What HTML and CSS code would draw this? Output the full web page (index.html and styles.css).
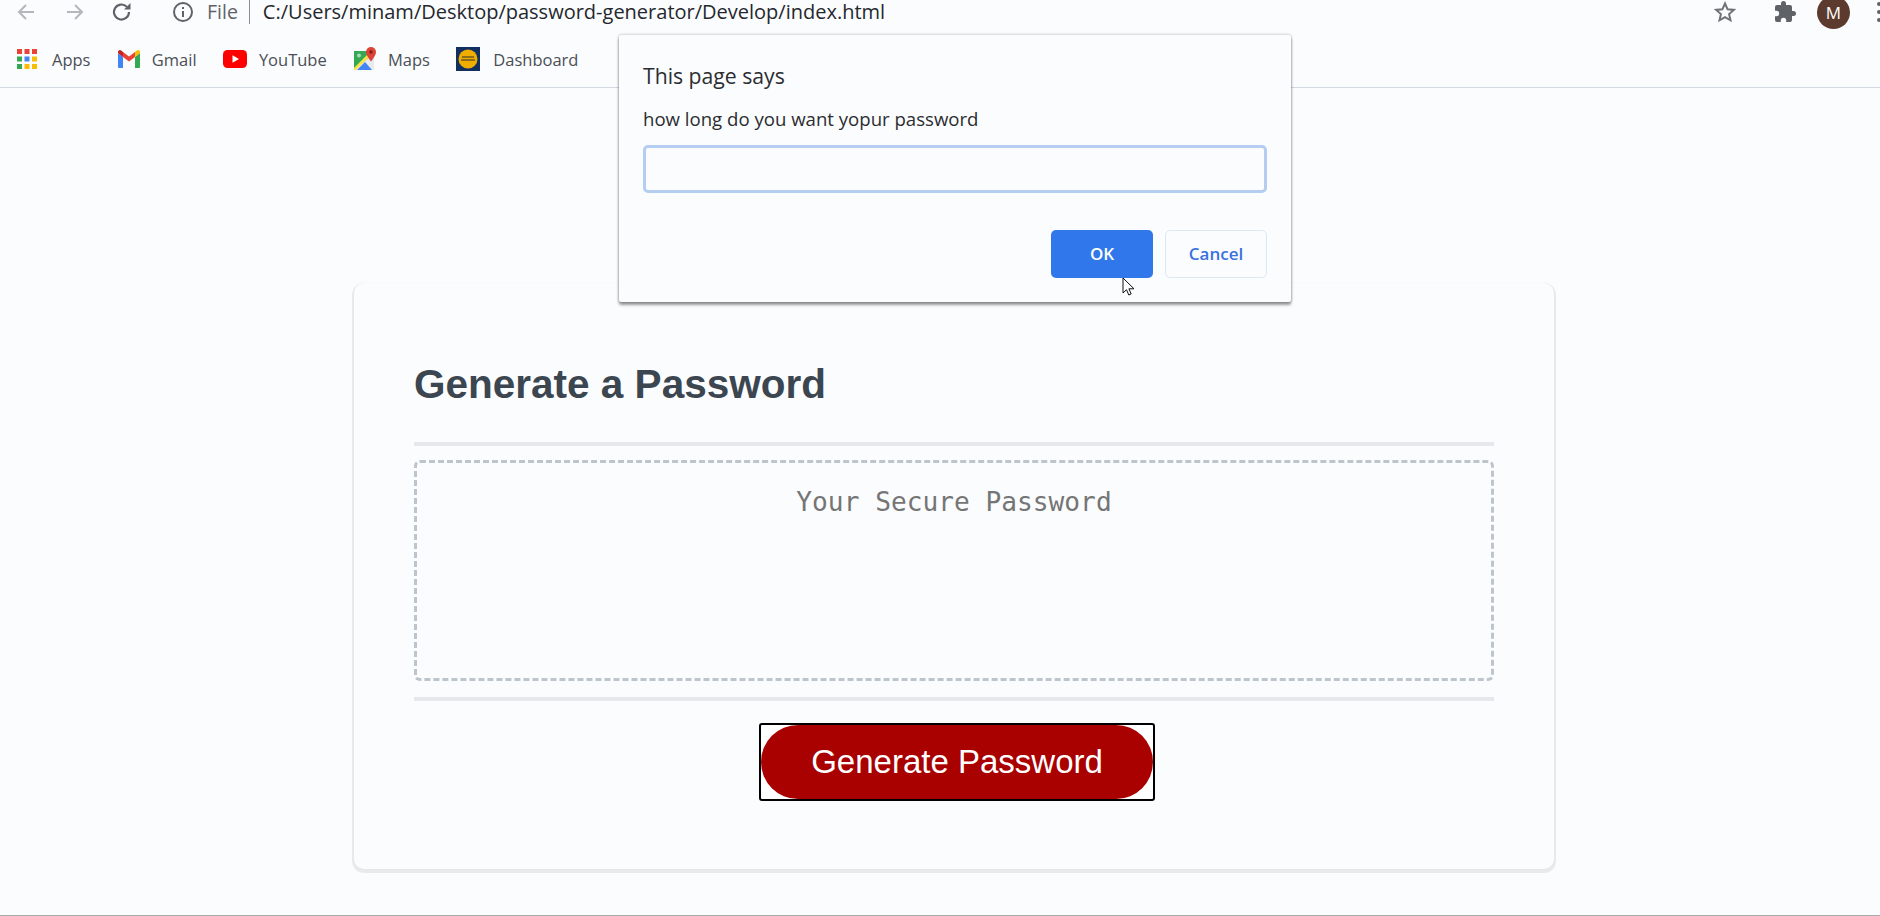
FILE: index.html
```html
<!DOCTYPE html>
<html lang="en">
<head>
  <meta charset="UTF-8">
  <title>Password Generator</title>
  <link rel="stylesheet" href="styles.css">
</head>
<body>

  <!-- BROWSER CHROME -->
  <header class="chrome">
    <div class="toolbar">
      <svg class="nav-icon back" viewBox="0 0 24 24"><path d="M20 12H5M12 5l-7 7 7 7" fill="none" stroke="#b4b7bb" stroke-width="2"/></svg>
      <svg class="nav-icon forward" viewBox="0 0 24 24"><path d="M4 12h15M12 5l7 7-7 7" fill="none" stroke="#b4b7bb" stroke-width="2"/></svg>
      <svg class="nav-icon reload" viewBox="0 0 24 24"><path d="M19 12a7.5 7.5 0 1 1-2.2-5.3" fill="none" stroke="#5f6368" stroke-width="2.2"/><path d="M20.5 3v6.5H14z" fill="#5f6368"/></svg>
      <svg class="info-icon" viewBox="0 0 24 24"><circle cx="12" cy="12" r="9" fill="none" stroke="#5f6368" stroke-width="2"/><path d="M11 11h2v6h-2zM11 7h2v2h-2z" fill="#5f6368"/></svg>
      <span class="file-label">File</span>
      <span class="url">C:/Users/minam/Desktop/password-generator/Develop/index.html</span>
      <svg class="star-icon" viewBox="0 0 24 24"><path d="M12 3.5l2.6 5.8 6.3.6-4.8 4.2 1.4 6.2-5.5-3.2-5.5 3.2 1.4-6.2-4.8-4.2 6.3-.6z" fill="none" stroke="#6f7276" stroke-width="2"/></svg>
      <svg class="puzzle-icon" viewBox="0 0 24 24"><path d="M20.5 11H19V7a2 2 0 0 0-2-2h-4V3.5a2.5 2.5 0 0 0-5 0V5H4a2 2 0 0 0-2 2v3.8h1.5a2.7 2.7 0 0 1 0 5.4H2V20a2 2 0 0 0 2 2h3.8v-1.5a2.7 2.7 0 0 1 5.4 0V22H17a2 2 0 0 0 2-2v-4h1.5a2.5 2.5 0 0 0 0-5z" fill="#5f6368"/></svg>
      <span class="avatar">M</span>
      <span class="menu-dots"><i></i><i></i><i></i></span>
    </div>
    <nav class="bookmarks">
      <a class="bookmark">
        <svg viewBox="0 0 20 20" class="bm-icon">
          <rect x="0" y="0" width="5" height="5" fill="#ea4335"/><rect x="7.5" y="0" width="5" height="5" fill="#ea4335"/><rect x="15" y="0" width="5" height="5" fill="#ea4335"/>
          <rect x="0" y="7.5" width="5" height="5" fill="#34a853"/><rect x="7.5" y="7.5" width="5" height="5" fill="#4285f4"/><rect x="15" y="7.5" width="5" height="5" fill="#fbbc04"/>
          <rect x="0" y="15" width="5" height="5" fill="#34a853"/><rect x="7.5" y="15" width="5" height="5" fill="#fbbc04"/><rect x="15" y="15" width="5" height="5" fill="#fbbc04"/>
        </svg>
        Apps
      </a>
      <a class="bookmark">
        <svg viewBox="0 0 24 20" class="bm-icon gmail">
          <path d="M1 19V4l5 4v11H2a1 1 0 0 1-1-1z" fill="#4285f4"/>
          <path d="M23 19V4l-5 4v11h4a1 1 0 0 0 1-1z" fill="#34a853"/>
          <path d="M6 8L1 4V3a2 2 0 0 1 3.200-1.600L6 3z" fill="#c5221f"/>
          <path d="M18 8l5-4V3a2 2 0 0 0-3.200-1.600L18 3z" fill="#fbbc04"/>
          <path d="M6 3l6 4.600L18 3v5l-6 4.600L6 8z" fill="#ea4335"/>
        </svg>
        Gmail
      </a>
      <a class="bookmark">
        <svg viewBox="0 0 24 18" class="bm-icon youtube">
          <rect width="24" height="18" rx="4.500" fill="#ff0000"/>
          <path d="M9.500 5.200L16 9l-6.500 3.800z" fill="#fff"/>
        </svg>
        YouTube
      </a>
      <a class="bookmark">
        <svg viewBox="0 0 24 24" class="bm-icon maps">
          <rect x="1" y="4" width="20" height="19" fill="#34a853"/>
          <path d="M1 23L21 6v17z" fill="#e8eaed"/>
          <path d="M4 23l8-8 7 8z" fill="#4285f4"/>
          <path d="M1 21L16 6l2 2L3 23H1z" fill="#fbe44b"/>
          <circle cx="6" cy="8.500" r="2" fill="#a8dab5"/>
          <path d="M18 0a5 5 0 0 0-5 5c0 3.500 5 9.500 5 9.500S23 8.500 23 5a5 5 0 0 0-5-5z" fill="#db4437"/>
          <circle cx="18" cy="5" r="1.700" fill="#8c1a11"/>
        </svg>
        Maps
      </a>
      <a class="bookmark">
        <svg viewBox="0 0 24 24" class="bm-icon dash">
          <rect width="24" height="24" fill="#12305f"/>
          <circle cx="12" cy="12" r="9.500" fill="#f0ad00"/>
          <path d="M6 10h12M5 13h14" stroke="#6b5a1e" stroke-width="1.400"/>
        </svg>
        Dashboard
      </a>
    </nav>
  </header>

  <!-- PAGE -->
  <main class="page">
    <section class="card">
      <h2 class="card-title">Generate a Password</h2>
      <div class="card-body">
        <textarea class="password-box" placeholder="Your Secure Password" readonly></textarea>
      </div>
      <div class="card-footer">
        <span class="focus-ring"><button class="generate-btn">Generate Password</button></span>
      </div>
    </section>
  </main>

  <!-- PROMPT DIALOG -->
  <div class="dialog">
    <div class="dialog-title">This page says</div>
    <div class="dialog-msg">how long do you want yopur password</div>
    <input class="dialog-input" type="text">
    <div class="dialog-actions">
      <button class="btn-ok">OK</button>
      <button class="btn-cancel">Cancel</button>
    </div>
  </div>

  <!-- MOUSE CURSOR -->
  <svg class="cursor" viewBox="0 0 14 20"><path d="M1 1v15l3.500-3.300 2.300 5.300 2.400-1-2.300-5.200H12z" fill="#fff" stroke="#111" stroke-width="1"/></svg>

</body>
</html>
```

FILE: styles.css
```css
/* ------------- RESET & BASE ------------- */
* { margin: 0; padding: 0; box-sizing: border-box; }
html, body { height: 100%; }
body {
  display: flex; flex-direction: column;
  height: 916px; overflow: hidden;
  background: #fbfcfe;
  font-family: 'Open Sans', 'Noto Sans', sans-serif;
  border-bottom: 1px solid #a9abad;
}

/* ------------- BROWSER CHROME ------------- */
.chrome { border-bottom: 1px solid #d2d9e2; height: 88px; flex: none; }
.toolbar {
  height: 32px; padding: 0 0 8px 14px;
  display: flex; align-items: center;
}
.nav-icon { width: 24px; height: 24px; flex: none; }
.forward { margin-left: 25px; }
.reload { margin-left: 23px; }
.info-icon { width: 24px; height: 24px; margin-left: 37px; flex: none; }
.file-label {
  margin-left: 12px; padding-right: 11px;
  border-right: 1px solid #8a8d91;
  font-size: 19.5px; line-height: 24px; color: #5f6368;
}
.url { margin-left: 13px; font-size: 20px; line-height: 24px; color: #24282c; white-space: nowrap; }
.star-icon { width: 24px; height: 24px; margin-left: auto; flex: none; }
.puzzle-icon { width: 24px; height: 24px; margin-left: 36px; flex: none; }
.avatar {
  width: 33px; height: 33px; margin-left: 20px; flex: none;
  border-radius: 50%; background: #5c3a2e; color: #fff;
  display: flex; align-items: center; justify-content: center;
  font-size: 17px;
}
.menu-dots {
  display: flex; flex-direction: column; gap: 4px; flex: none;
  margin-left: 27px; margin-right: -1px;
}
.menu-dots i { width: 4px; height: 4px; background: #5f6368; border-radius: 50%; }

.bookmarks {
  height: 55px; padding: 0 0 1px 17px;
  display: flex; align-items: center;
}
.bookmark {
  display: flex; align-items: center;
  margin-right: 26.3px;
  font-size: 16.5px; color: #4a4f55;
}
.bm-icon { width: 20px; height: 20px; margin-right: 15px; }
.gmail { width: 24px; margin-right: 11px; }
.youtube { width: 24px; height: 18px; margin-right: 12px; }
.maps { width: 24px; height: 24px; margin-right: 11px; }
.dash { width: 24px; height: 24px; margin-right: 13px; }

/* ------------- PAGE ------------- */
.page {
  flex: 1; display: flex; justify-content: center;
  padding-top: 195px; padding-left: 28px;
}
.card {
  width: 1200px; height: 586px;
  padding: 0 60px;
  border-radius: 10px;
  box-shadow: 0 2px 0 2px rgba(0,0,0,0.07), 0 0 2px rgba(0,0,0,0.06);
}
.card-title {
  height: 163px; padding-top: 76px;
  border-bottom: 4px solid #e6e8eb;
  font-family: 'Liberation Sans', Arial, sans-serif;
  font-size: 40.5px; font-weight: bold; line-height: 50px; color: #3b4650;
}
.card-body { padding: 14px 0 16px; border-bottom: 4px solid #e6e8eb; }
.password-box {
  display: block; width: 100%; height: 221px;
  padding: 23px 0 0;
  border: 3px dashed #bcc5cb; border-radius: 6px;
  background: transparent; outline: none; resize: none;
  font-family: 'DejaVu Sans Mono', monospace;
  font-size: 26.2px; line-height: 32px; text-align: center;
}
.password-box::placeholder { color: #757575; opacity: 1; }
.card-footer { display: flex; justify-content: center; padding-top: 22px; padding-left: 6px; }
.focus-ring {
  display: block;
  border: 2px solid #000; border-radius: 3px;
  background: #fff;
}
.generate-btn {
  display: block; width: 392px; height: 74px;
  border: none; border-radius: 37px;
  background: #a90000; color: #fff;
  font-family: 'Liberation Sans', Arial, sans-serif;
  font-size: 33px;
}

/* ------------- PROMPT DIALOG ------------- */
.dialog {
  position: absolute; top: 35px; left: 619px;
  width: 672px; height: 267px;
  padding: 27px 24px 0;
  background: #fbfcfe;
  border-radius: 2px;
  box-shadow: 0 0 3px rgba(0,0,0,0.32), 0 3px 3px rgba(0,0,0,0.38);
  color: #2b2d30;
}
.dialog-title { font-size: 21.2px; line-height: 28px; }
.dialog-msg { margin-top: 17px; font-size: 18.6px; line-height: 24px; }
.dialog-input {
  display: block; width: 100%; height: 48px; margin-top: 14px;
  border: 3px solid #b4cdf0; border-radius: 5px;
  background: transparent; outline: none;
}
.dialog-actions { display: flex; justify-content: flex-end; gap: 12px; margin-top: 37px; }
.dialog-actions button {
  width: 102px; height: 48px; padding-bottom: 2px;
  border-radius: 5px;
  font-family: inherit; font-size: 17px; font-weight: 600;
}
.btn-ok { border: none; background: #2f77ea; color: #fff; }
.btn-cancel { border: 1px solid #dce8f0; background: transparent; color: #3a72e0; }

.cursor {
  position: absolute; top: 277px; left: 1122px;
  width: 14px; height: 20px;
}
```
